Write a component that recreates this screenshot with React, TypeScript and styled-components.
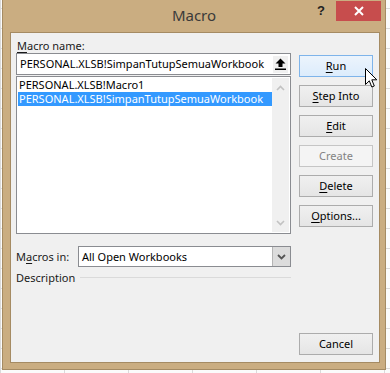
import styled, { createGlobalStyle, css } from "styled-components";

const GlobalStyle = createGlobalStyle`
  html, body {
    margin: 0;
    padding: 0;
  }
  body {
    font-family: "Noto Sans", "Liberation Sans", sans-serif;
    color: #000;
  }
`;

const buttons = [
  { key: "run", label: "Run", mnemonic: 0, primary: true },
  { key: "step", label: "Step Into", mnemonic: 0 },
  { key: "edit", label: "Edit", mnemonic: 0 },
  { key: "create", label: "Create", mnemonic: -1, disabled: true },
  { key: "delete", label: "Delete", mnemonic: 0 },
  { key: "options", label: "Options...", mnemonic: 0 },
];

const macros = ["PERSONAL.XLSB!Macro1", "PERSONAL.XLSB!SimpanTutupSemuaWorkbook"];

function Mnemonic({ text, at }: { text: string; at: number }) {
  if (at < 0) return <>{text}</>;
  return (
    <>
      {text.slice(0, at)}
      <U>{text[at]}</U>
      {text.slice(at + 1)}
    </>
  );
}

export default function App() {
  return (
    <>
      <GlobalStyle />
      <Desktop>
        <Window>
          <TitleBar>
            <span />
            <Title>Macro</Title>
            <Controls>
              <Help>?</Help>
              <Close>
                <svg width="10" height="10" viewBox="0 0 10 10">
                  <path d="M1 1 L9 9 M9 1 L1 9" stroke="#fff" strokeWidth="2" />
                </svg>
              </Close>
            </Controls>
          </TitleBar>

          <Client>
            <LeftCol>
              <FieldLabel>
                <Mnemonic text="Macro name:" at={0} />
              </FieldLabel>
              <NameInput>
                <InputText>PERSONAL.XLSB!SimpanTutupSemuaWorkbook</InputText>
                <UploadBtn>
                  <svg width="11" height="12" viewBox="0 0 11 12">
                    <path d="M5.5 0.5 L10.5 5.5 L7.5 5.5 L7.5 9 L3.5 9 L3.5 5.5 L0.5 5.5 Z" fill="#000" />
                    <rect x="0" y="10.5" width="11" height="1.5" fill="#000" />
                  </svg>
                </UploadBtn>
              </NameInput>
              <ListBox>
                <Items>
                  {macros.map((m, i) => (
                    <Item key={m} $selected={i === 1}>
                      {m}
                    </Item>
                  ))}
                </Items>
                <ScrollBar>
                  <svg width="9" height="6" viewBox="0 0 9 6">
                    <path d="M1 5 L4.5 1.5 L8 5" stroke="#c2c2c2" strokeWidth="1.6" fill="none" />
                  </svg>
                  <svg width="9" height="6" viewBox="0 0 9 6">
                    <path d="M1 1 L4.5 4.5 L8 1" stroke="#c2c2c2" strokeWidth="1.6" fill="none" />
                  </svg>
                </ScrollBar>
              </ListBox>

              <MacrosRow>
                <RowLabel>
                  <Mnemonic text="Macros in:" at={1} />
                </RowLabel>
                <Select>
                  <SelectText>All Open Workbooks</SelectText>
                  <DropBtn>
                    <svg width="9" height="6" viewBox="0 0 9 6">
                      <path d="M1 1 L4.5 4.5 L8 1" stroke="#555" strokeWidth="1.8" fill="none" />
                    </svg>
                  </DropBtn>
                </Select>
              </MacrosRow>

              <DescRow>
                <RowLabel $auto>Description</RowLabel>
                <Rule />
              </DescRow>
            </LeftCol>

            <RightCol>
              {buttons.map((b) => (
                <Button key={b.key} $primary={b.primary} disabled={b.disabled}>
                  <Mnemonic text={b.label} at={b.mnemonic} />
                </Button>
              ))}
              <CancelButton>Cancel</CancelButton>
            </RightCol>
          </Client>
        </Window>

        <Cursor width="13" height="21" viewBox="0 0 13 21">
          <path
            d="M0.5 0.5 L0.5 16.5 L4.3 12.8 L6.8 19 L9.3 18 L6.8 11.8 L11.8 11.8 Z"
            fill="#fff"
            stroke="#000"
            strokeWidth="1"
          />
        </Cursor>
      </Desktop>
    </>
  );
}

const Desktop = styled.div`
  position: relative;
  width: 390px;
  height: 373px;
  box-sizing: border-box;
  padding-left: 2px;
  background-color: #fbfbfb;
  background-image: linear-gradient(#dadada 1px, transparent 1px),
    linear-gradient(90deg, #dadada 1px, transparent 1px);
  background-size: 64px 20px;
  background-position: 0 8px;
  overflow: hidden;
`;

const Window = styled.div`
  width: 384px;
  height: 370px;
  box-sizing: border-box;
  background: #caad81;
  border: 1px solid #a58b63;
  border-top: none;
  display: flex;
  flex-direction: column;
`;

const TitleBar = styled.div`
  height: 32px;
  flex: none;
  display: grid;
  grid-template-columns: 1fr auto 1fr;
  align-items: start;
`;

const Title = styled.div`
  padding-top: 4px;
  font-family: "Noto Sans", sans-serif;
  font-size: 15px;
  line-height: 22px;
  color: #3a3a3a;
`;

const Controls = styled.div`
  display: flex;
  justify-content: flex-end;
  align-items: flex-start;
  padding-right: 4px;
  padding-top: 1px;
`;

const Help = styled.div`
  font-family: "Liberation Sans", sans-serif;
  font-weight: bold;
  font-size: 13px;
  line-height: 20px;
  color: #222;
  margin-right: 11px;
`;

const Close = styled.div`
  width: 45px;
  height: 20px;
  background: #c74d4d;
  display: flex;
  align-items: center;
  justify-content: center;
`;

const Client = styled.div`
  flex: 1;
  margin: 0 5px 6px 7px;
  background: #f0f0f0;
  border: 1px solid #a58b63;
  box-sizing: border-box;
  padding: 5px 6px 7px 5px;
  display: grid;
  grid-template-columns: 275px 74px;
  column-gap: 8px;
  font-size: 11px;
`;

const LeftCol = styled.div`
  display: flex;
  flex-direction: column;
`;

const U = styled.span`
  text-decoration: underline;
  text-underline-offset: 2px;
`;

const FieldLabel = styled.div`
  height: 15px;
  line-height: 15px;
  padding-left: 1px;
  color: #1a1a1a;
`;

const boxBorder = css`
  border: 1px solid #8a8c91;
  box-sizing: border-box;
  background: #fff;
`;

const NameInput = styled.div`
  ${boxBorder};
  height: 22px;
  display: flex;
  align-items: center;
  padding: 0 2px 0 3px;
`;

const InputText = styled.div`
  flex: 1;
  white-space: nowrap;
  overflow: hidden;
  line-height: 18px;
`;

const UploadBtn = styled.div`
  width: 15px;
  height: 17px;
  background: #f0f0f0;
  display: flex;
  align-items: center;
  justify-content: center;
`;

const ListBox = styled.div`
  ${boxBorder};
  margin-top: 1px;
  height: 158px;
  display: flex;
  padding: 1px;
`;

const Items = styled.div`
  flex: 1;
`;

const Item = styled.div<{ $selected?: boolean }>`
  height: 14px;
  line-height: 14px;
  padding-left: 1px;
  white-space: nowrap;
  background: ${(p) => (p.$selected ? "#3399ff" : "transparent")};
  color: ${(p) => (p.$selected ? "#fff" : "#000")};
`;

const ScrollBar = styled.div`
  width: 17px;
  background: #f0f0f0;
  display: flex;
  flex-direction: column;
  justify-content: space-between;
  align-items: center;
  padding: 7px 0 6px;
  box-sizing: border-box;
`;

const MacrosRow = styled.div`
  margin-top: 12px;
  display: flex;
  align-items: center;
`;

const RowLabel = styled.div<{ $auto?: boolean }>`
  width: ${(p) => (p.$auto ? "auto" : "62px")};
  flex: none;
  color: #1a1a1a;
  white-space: nowrap;
`;

const Select = styled.div`
  ${boxBorder};
  flex: 1;
  height: 21px;
  display: flex;
  align-items: stretch;
`;

const SelectText = styled.div`
  flex: 1;
  padding-left: 3px;
  line-height: 19px;
`;

const DropBtn = styled.div`
  width: 17px;
  background: #dcdcdc;
  border-left: 1px solid #b5b5b5;
  display: flex;
  align-items: center;
  justify-content: center;
`;

const DescRow = styled.div`
  margin-top: 2px;
  display: flex;
  align-items: center;
  height: 16px;
`;

const Rule = styled.div`
  flex: 1;
  height: 1px;
  background: #dadada;
  margin-left: 5px;
`;

const RightCol = styled.div`
  display: flex;
  flex-direction: column;
  gap: 8px;
  padding-top: 17px;
`;

const Button = styled.button<{ $primary?: boolean }>`
  height: 22px;
  width: 74px;
  padding: 0 0 1px;
  font-family: inherit;
  font-size: 11px;
  color: #000;
  border: 1px solid ${(p) => (p.$primary ? "#7eb4ea" : "#acacac")};
  background: ${(p) =>
    p.$primary ? "linear-gradient(#ecf4fc, #dcecfc)" : "linear-gradient(#f0f0f0, #e5e5e5)"};

  &:disabled {
    color: #838383;
    border-color: #c5c5c5;
    background: #f4f4f4;
  }
`;

const CancelButton = styled(Button)`
  margin-top: auto;
`;

const Cursor = styled.svg`
  position: absolute;
  left: 365px;
  top: 68px;
`;
